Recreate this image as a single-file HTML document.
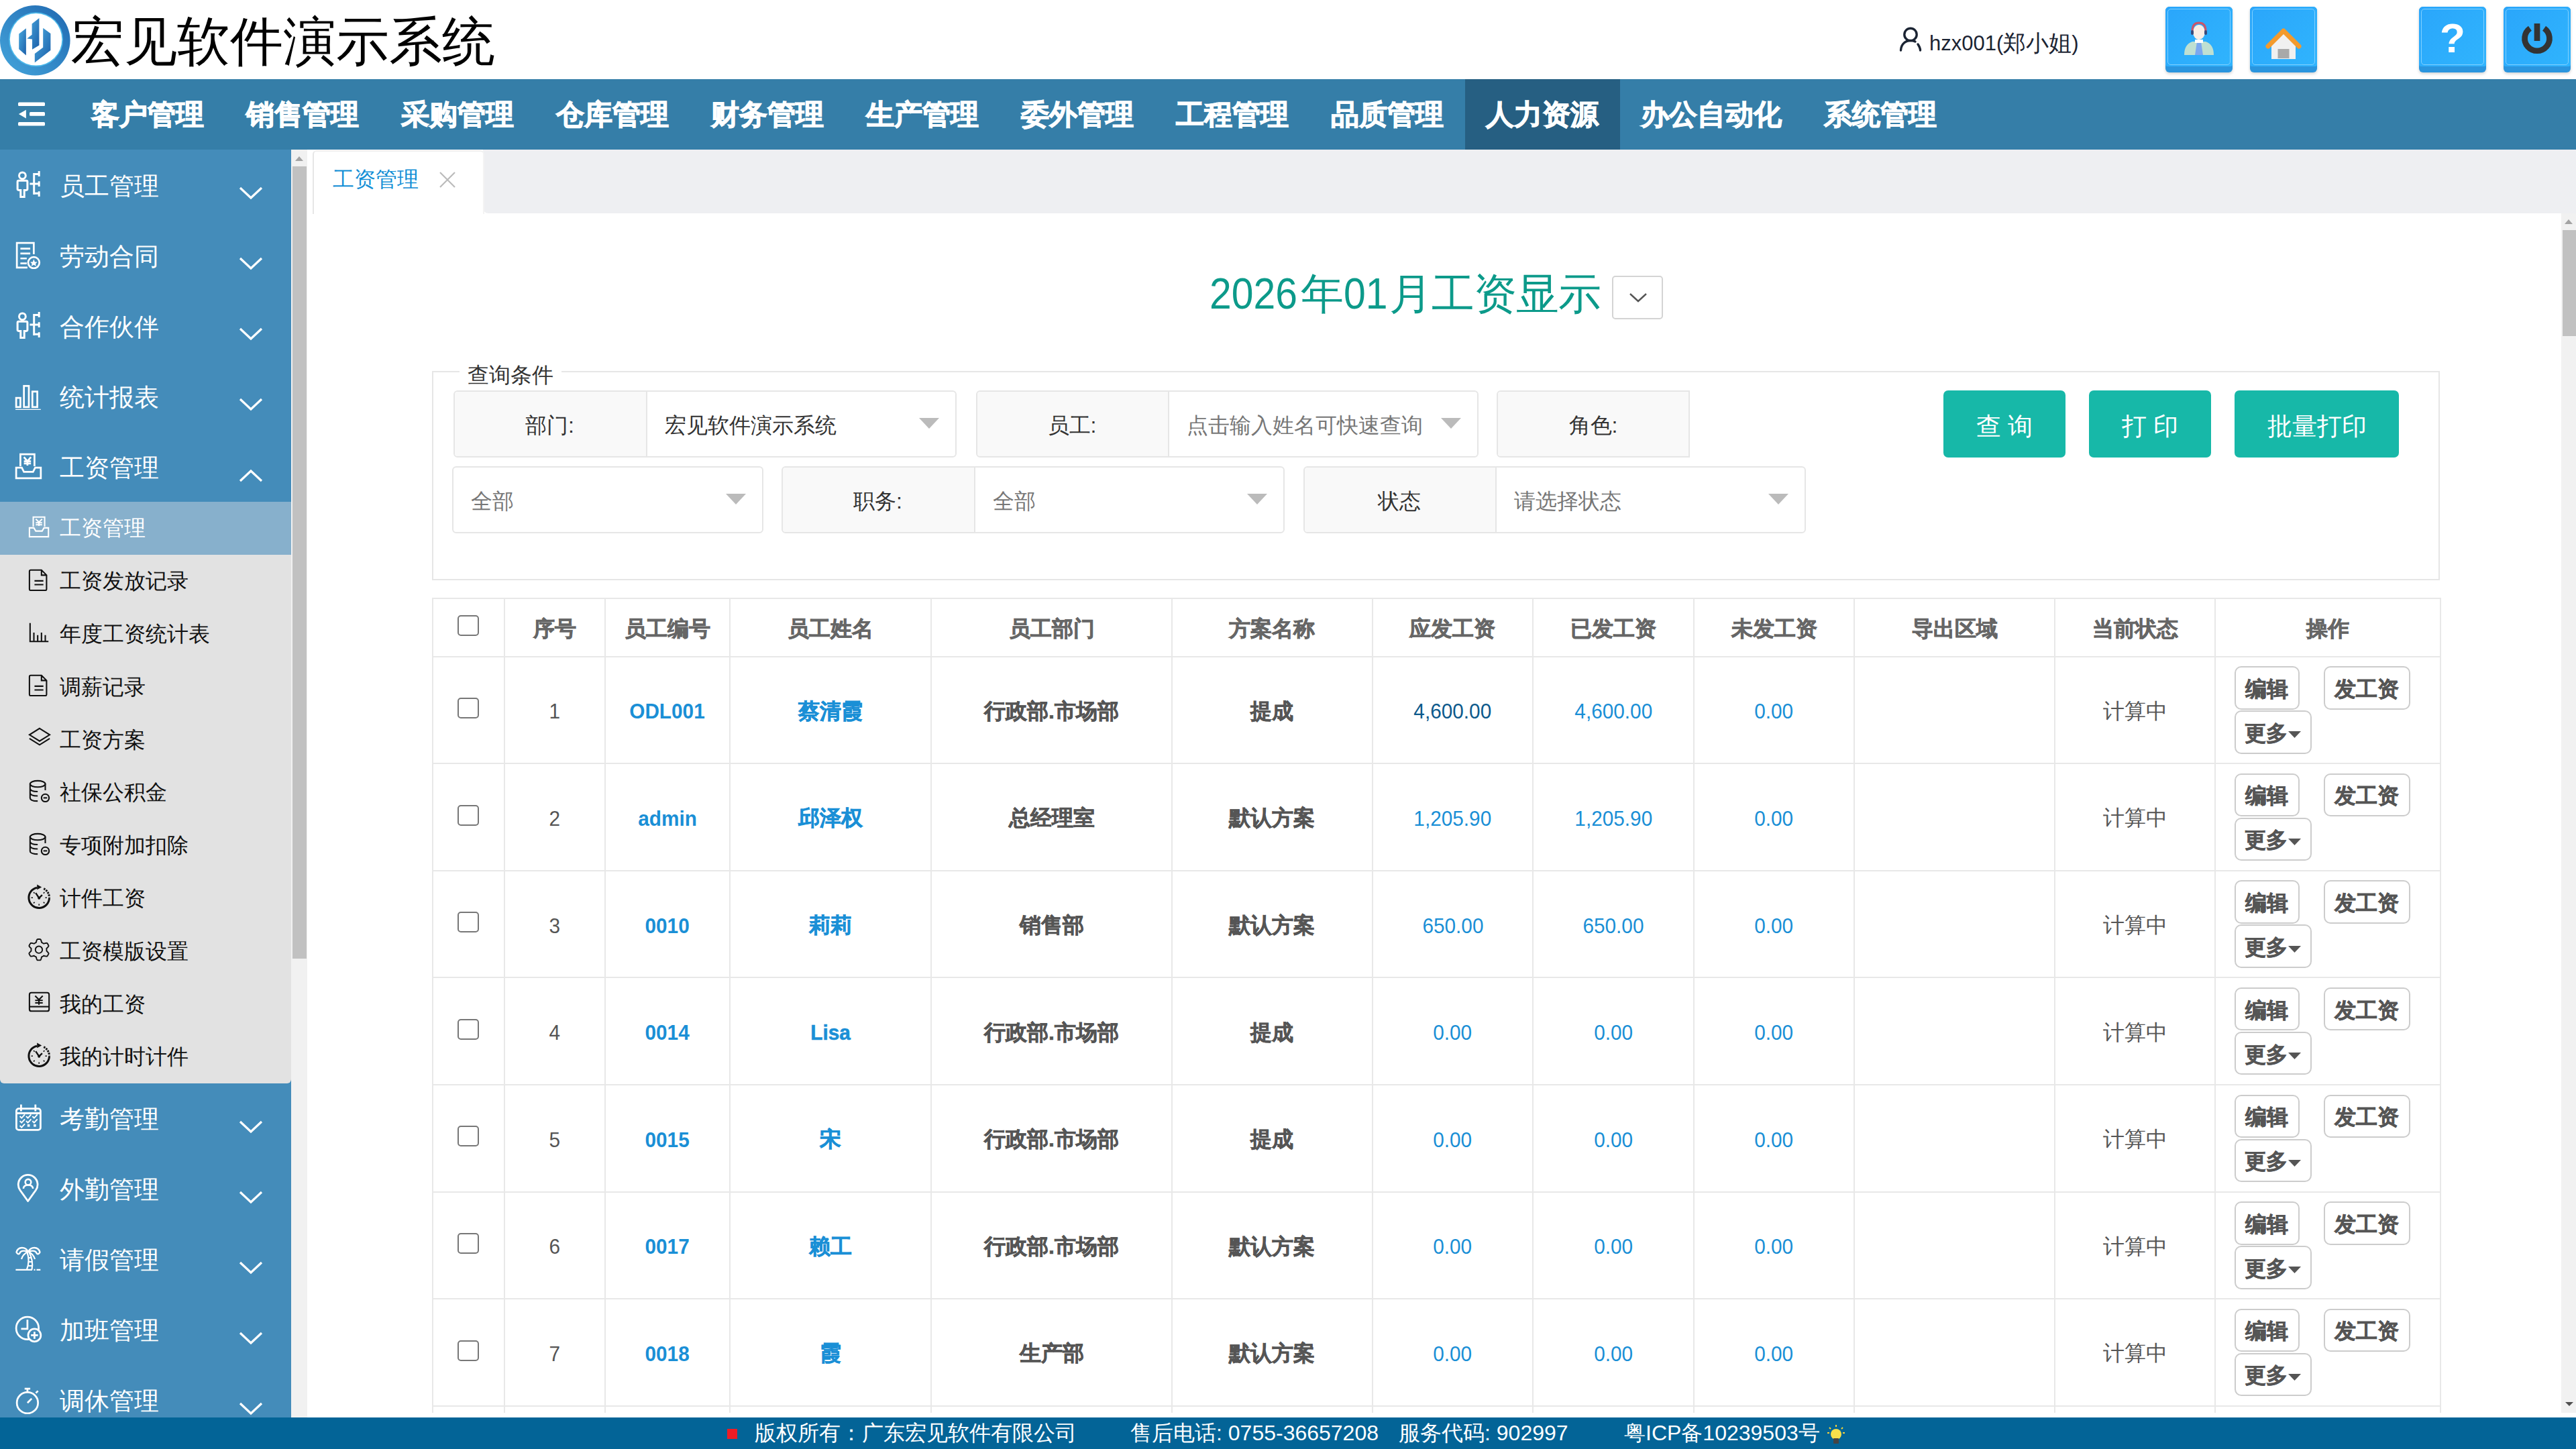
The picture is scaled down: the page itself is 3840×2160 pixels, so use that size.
<!DOCTYPE html><html><head><meta charset="utf-8"><style>
*{box-sizing:border-box;margin:0;padding:0}
html,body{width:3840px;height:2160px;overflow:hidden;background:#fff;font-family:"Liberation Sans",sans-serif}
.abs{position:absolute}
.c{position:absolute;display:flex;align-items:center;justify-content:center;white-space:nowrap}
.l{position:absolute;display:flex;align-items:center;white-space:nowrap}
</style></head><body><svg class="abs" style="left:0;top:8px" width="106" height="106" viewBox="0 0 106 106">
<defs>
<linearGradient id="lg1" x1="0" y1="1" x2="1" y2="0"><stop offset="0" stop-color="#45a6dc"/><stop offset="1" stop-color="#1f67b0"/></linearGradient>
<linearGradient id="lg2" x1="0" y1="0" x2="1" y2="1"><stop offset="0" stop-color="#49aadf"/><stop offset="1" stop-color="#1c5fa9"/></linearGradient>
</defs>
<circle cx="52.3" cy="52.3" r="52.3" fill="url(#lg1)"/>
<circle cx="53.6" cy="50.8" r="40.5" fill="#4cb8ea"/>
<circle cx="53.6" cy="50.8" r="38.8" fill="#fff"/>
<g fill="url(#lg2)" transform="translate(0,-8)">
<polygon points="28.2,50.5 38.9,42.2 38.9,82.4 28.2,73.3"/>
<polygon points="47.6,35.6 58.4,26.9 58.4,67.5 48,73.7 48,58.4 40.2,57.6 47.6,51.8"/>
<polygon points="64.2,41.8 75.4,50.1 75.4,74.9 51.8,93.2 51.8,79.9 64.2,70.8"/>
</g>
</svg><div class="l" style="left:106px;top:8px;height:110px;font-size:79px;color:#000">宏见软件演示系统</div><svg class="abs" style="left:2830px;top:38px" width="38" height="42" viewBox="0 0 38 42">
<circle cx="18" cy="13.4" r="9.2" fill="none" stroke="#1b2433" stroke-width="3.4"/>
<path d="M3.5 37 C4 27 11 22.5 18 22.5 C21 22.5 23 23 25 24" fill="none" stroke="#1b2433" stroke-width="3.4" stroke-linecap="round"/>
<path d="M29 28 C31 31 32.5 34 32.5 37" fill="none" stroke="#1b2433" stroke-width="3.4" stroke-linecap="round"/>
</svg><div class="l" style="left:2876px;top:40px;height:50px;font-size:34px;color:#1b2433"><span style="font-size:31px">hzx001(</span>郑小姐<span style="font-size:31px">)</span></div><div class="abs" style="left:3228px;top:10px;width:100px;height:98px;border-radius:6px;background:#2a95de;box-shadow:0 2px 4px rgba(0,0,0,0.18)">
<div class="abs" style="left:0;top:0;width:100px;height:89px;border-radius:6px 6px 3px 3px;background:linear-gradient(135deg,#2aa6fb,#30b4fd)"></div>
<div class="abs" style="left:3px;top:3px;width:94px;height:84px;border-radius:5px;border:1.5px solid #7fd0ff"></div>
<svg class="abs" style="left:0;top:0" width="100" height="98" viewBox="0 0 100 98">
<path d="M28 72 Q28 56 40 52 L60 52 Q72 56 72 72 Z" fill="#bfe0d2"/>
<path d="M47 52 L53 52 L56 72 L44 72 Z" fill="#7ba8f0"/>
<rect x="44" y="49" width="12" height="5" fill="#fff"/>
<ellipse cx="50" cy="38" rx="9" ry="11" fill="#fbeee6"/>
<path d="M40 36 Q40 24 50 24 Q60 24 60 36" fill="none" stroke="#c9566a" stroke-width="3"/>
<rect x="38" y="35" width="4" height="7" rx="2" fill="#3b4a7a"/>
<rect x="58" y="35" width="4" height="7" rx="2" fill="#3b4a7a"/>
</svg></div><div class="abs" style="left:3354px;top:10px;width:100px;height:98px;border-radius:6px;background:#2a95de;box-shadow:0 2px 4px rgba(0,0,0,0.18)">
<div class="abs" style="left:0;top:0;width:100px;height:89px;border-radius:6px 6px 3px 3px;background:linear-gradient(135deg,#2aa6fb,#30b4fd)"></div>
<div class="abs" style="left:3px;top:3px;width:94px;height:84px;border-radius:5px;border:1.5px solid #7fd0ff"></div>
<svg class="abs" style="left:0;top:0" width="100" height="98" viewBox="0 0 100 98">
<path d="M32 55 L50 38 L68 55 L68 78 L32 78 Z" fill="#f0f0f0"/>
<rect x="41.5" y="63" width="17" height="14" fill="#a9a9a9"/>
<path d="M27 59 L50 36 L73 59" stroke="#f39a2c" stroke-width="7" stroke-linejoin="round" stroke-linecap="round" fill="none"/>
</svg></div><div class="abs" style="left:3606px;top:10px;width:100px;height:98px;border-radius:6px;background:#2a95de;box-shadow:0 2px 4px rgba(0,0,0,0.18)">
<div class="abs" style="left:0;top:0;width:100px;height:89px;border-radius:6px 6px 3px 3px;background:linear-gradient(135deg,#2aa6fb,#30b4fd)"></div>
<div class="abs" style="left:3px;top:3px;width:94px;height:84px;border-radius:5px;border:1.5px solid #7fd0ff"></div>
<div class="c" style="left:0;top:0;width:100px;height:89px;font-size:62px;color:#fff;font-weight:bold;padding-top:4px">?</div></div><div class="abs" style="left:3732px;top:10px;width:100px;height:98px;border-radius:6px;background:#2a95de;box-shadow:0 2px 4px rgba(0,0,0,0.18)">
<div class="abs" style="left:0;top:0;width:100px;height:89px;border-radius:6px 6px 3px 3px;background:linear-gradient(135deg,#2aa6fb,#30b4fd)"></div>
<div class="abs" style="left:3px;top:3px;width:94px;height:84px;border-radius:5px;border:1.5px solid #7fd0ff"></div>
<svg class="abs" style="left:0;top:0" width="100" height="98" viewBox="0 0 100 98">
<path d="M60.58 32.19 A18.45 18.45 0 1 1 39.42 32.19" fill="none" stroke="#333" stroke-width="8.7"/>
<line x1="50" y1="25" x2="50" y2="51" stroke="#333" stroke-width="8.7"/>
</svg></div><div class="abs" style="left:0;top:118px;width:3840px;height:105px;background:#357ea8"></div><svg class="abs" style="left:0;top:118px" width="104" height="105" viewBox="0 0 104 105">
<rect x="27" y="34.4" width="40" height="5.6" rx="1.5" fill="#fff"/>
<rect x="44" y="49" width="23" height="5.8" rx="1.5" fill="#fff"/>
<rect x="27" y="63.9" width="40" height="5.6" rx="1.5" fill="#fff"/>
<polygon points="27.9,51.9 38.9,45.7 38.9,58.6" fill="#fff"/>
</svg><div class="c" style="left:104.5px;top:118px;width:231px;height:105px;font-size:42px;font-weight:bold;color:#fff;-webkit-text-stroke:1.1px #fff">客户管理</div><div class="c" style="left:335.5px;top:118px;width:231px;height:105px;font-size:42px;font-weight:bold;color:#fff;-webkit-text-stroke:1.1px #fff">销售管理</div><div class="c" style="left:566.5px;top:118px;width:231px;height:105px;font-size:42px;font-weight:bold;color:#fff;-webkit-text-stroke:1.1px #fff">采购管理</div><div class="c" style="left:797.5px;top:118px;width:231px;height:105px;font-size:42px;font-weight:bold;color:#fff;-webkit-text-stroke:1.1px #fff">仓库管理</div><div class="c" style="left:1028.5px;top:118px;width:231px;height:105px;font-size:42px;font-weight:bold;color:#fff;-webkit-text-stroke:1.1px #fff">财务管理</div><div class="c" style="left:1259.5px;top:118px;width:231px;height:105px;font-size:42px;font-weight:bold;color:#fff;-webkit-text-stroke:1.1px #fff">生产管理</div><div class="c" style="left:1490.5px;top:118px;width:231px;height:105px;font-size:42px;font-weight:bold;color:#fff;-webkit-text-stroke:1.1px #fff">委外管理</div><div class="c" style="left:1721.5px;top:118px;width:231px;height:105px;font-size:42px;font-weight:bold;color:#fff;-webkit-text-stroke:1.1px #fff">工程管理</div><div class="c" style="left:1952.5px;top:118px;width:231px;height:105px;font-size:42px;font-weight:bold;color:#fff;-webkit-text-stroke:1.1px #fff">品质管理</div><div class="c" style="left:2183.5px;top:118px;width:231px;height:105px;background:#265f82;font-size:42px;font-weight:bold;color:#fff;-webkit-text-stroke:1.1px #fff">人力资源</div><div class="c" style="left:2414.5px;top:118px;width:273px;height:105px;font-size:42px;font-weight:bold;color:#fff;-webkit-text-stroke:1.1px #fff">办公自动化</div><div class="c" style="left:2687.5px;top:118px;width:231px;height:105px;font-size:42px;font-weight:bold;color:#fff;-webkit-text-stroke:1.1px #fff">系统管理</div><div class="abs" style="left:0;top:223px;width:434px;height:1890px;background:#448cba"></div><div class="abs" style="left:434px;top:223px;width:24px;height:1890px;background:#f1f1f1"></div><div class="abs" style="left:436px;top:248px;width:21px;height:1181px;background:#c1c1c1"></div><svg class="abs" style="left:434px;top:228px" width="24" height="16"><polygon points="6,12 12,5 18,12" fill="#a3a3a3"/></svg><svg class="abs" style="left:15px;top:245px" width="60" height="60"><circle cx="18.4" cy="16.8" r="4.9" stroke="#fff" stroke-width="3" fill="none"/><path d="M11.1 26 q0 -1.8 1.8 -1.8 h11.2 q1.8 0 1.8 1.8 v10.6 q0 1.8 -1.8 1.8 h-2.9 v10.1 h-5.4 v-10.1 h-2.9 q-1.8 0 -1.8 -1.8 z" stroke="#fff" stroke-width="3" fill="none"/><path d="M29.4 29 h6.3 M35.7 13.3 v31.6 M34.2 14.6 h8.5 M43.2 10.1 v7.9 M35.7 29 h7 M43.2 25.3 v7.6 M34.2 43.3 h8.5 M43.2 40.2 v7.8" stroke="#fff" stroke-width="3" fill="none"/></svg><div class="l" style="left:89px;top:223px;height:105px;font-size:37px;color:#fff;padding-top:4px">员工管理</div><svg class="abs" style="left:356px;top:277px" width="36" height="22"><polyline points="2,3 18,18 34,3" fill="none" stroke="#fff" stroke-width="3.2"/></svg><svg class="abs" style="left:22px;top:359px" width="42" height="42" viewBox="0 0 40 40"><path d="M27 19 V3 H3 V38 H18" stroke="#fff" stroke-width="2.6" fill="none"/><path d="M8 11 h14 M8 18 h14 M8 25 h9 M8 32 h9" stroke="#fff" stroke-width="2.6" fill="none"/><circle cx="27" cy="31" r="8" stroke="#fff" stroke-width="2.6" fill="none"/><polygon points="27,26 28.5,30 32,30 29.5,32.5 30.5,36 27,34 23.5,36 24.5,32.5 22,30 25.5,30" fill="#fff"/></svg><div class="l" style="left:89px;top:328px;height:105px;font-size:37px;color:#fff;padding-top:4px">劳动合同</div><svg class="abs" style="left:356px;top:382px" width="36" height="22"><polyline points="2,3 18,18 34,3" fill="none" stroke="#fff" stroke-width="3.2"/></svg><svg class="abs" style="left:15px;top:455px" width="60" height="60"><circle cx="18.4" cy="16.8" r="4.9" stroke="#fff" stroke-width="3" fill="none"/><path d="M11.1 26 q0 -1.8 1.8 -1.8 h11.2 q1.8 0 1.8 1.8 v10.6 q0 1.8 -1.8 1.8 h-2.9 v10.1 h-5.4 v-10.1 h-2.9 q-1.8 0 -1.8 -1.8 z" stroke="#fff" stroke-width="3" fill="none"/><path d="M29.4 29 h6.3 M35.7 13.3 v31.6 M34.2 14.6 h8.5 M43.2 10.1 v7.9 M35.7 29 h7 M43.2 25.3 v7.6 M34.2 43.3 h8.5 M43.2 40.2 v7.8" stroke="#fff" stroke-width="3" fill="none"/></svg><div class="l" style="left:89px;top:433px;height:105px;font-size:37px;color:#fff;padding-top:4px">合作伙伴</div><svg class="abs" style="left:356px;top:487px" width="36" height="22"><polyline points="2,3 18,18 34,3" fill="none" stroke="#fff" stroke-width="3.2"/></svg><svg class="abs" style="left:22px;top:569px" width="42" height="42" viewBox="0 0 40 40"><rect x="2" y="23" width="6" height="13" stroke="#fff" stroke-width="2.6" fill="none"/><rect x="13" y="6" width="7" height="30" stroke="#fff" stroke-width="2.6" fill="none"/><rect x="25" y="14" width="7" height="22" stroke="#fff" stroke-width="2.6" fill="none"/><path d="M1 40 h36" stroke="#fff" stroke-width="2.6" fill="none"/></svg><div class="l" style="left:89px;top:538px;height:105px;font-size:37px;color:#fff;padding-top:4px">统计报表</div><svg class="abs" style="left:356px;top:592px" width="36" height="22"><polyline points="2,3 18,18 34,3" fill="none" stroke="#fff" stroke-width="3.2"/></svg><svg class="abs" style="left:22px;top:674px" width="42" height="42" viewBox="0 0 40 40"><path d="M8 20 V3 H28 V20" stroke="#fff" stroke-width="2.6" fill="none"/><path d="M2 22 v15 h35 v-15 h-8 l-3 6 h-13 l-3 -6 z" stroke="#fff" stroke-width="2.6" fill="none"/><path d="M13 7 l5 6 l5 -6 M18 13 v6 M13 13 h10 M13 16 h10" stroke="#fff" stroke-width="2.6" fill="none"/></svg><div class="l" style="left:89px;top:643px;height:105px;font-size:37px;color:#fff;padding-top:4px">工资管理</div><svg class="abs" style="left:356px;top:698px" width="36" height="22"><polyline points="2,19 18,4 34,19" fill="none" stroke="#fff" stroke-width="3.2"/></svg><div class="abs" style="left:0;top:748px;width:434px;height:866.8px;background:#e2e2e2;border-radius:0 0 6px 6px"></div><div class="abs" style="left:0;top:748px;width:434px;height:78.8px;background:#87b0cc"></div><svg class="abs" style="left:42px;top:768.0px" width="34" height="34" viewBox="0 0 36 36"><path d="M8 18 V3 H26 V18" stroke="#fff" stroke-width="2.2" fill="none"/><path d="M2 20 v14 h30 v-14 h-7 l-3 5 h-10 l-3 -5 z" stroke="#fff" stroke-width="2.2" fill="none"/><path d="M12 6 l5 5 l5 -5 M17 11 v6 M12 12 h10 M12 15 h10" stroke="#fff" stroke-width="2.2" fill="none"/></svg><div class="l" style="left:89px;top:748.0px;height:78.8px;font-size:32px;color:#fff;padding-top:2px">工资管理</div><svg class="abs" style="left:42px;top:846.8px" width="34" height="34" viewBox="0 0 36 36"><path d="M4 3 h17 l8 8 v22 q0 2 -2 2 h-23 q-2 0 -2 -2 v-28 q0 -2 2 -2 z M21 3 v8 h8" stroke="#111" stroke-width="2.2" fill="none"/><path d="M10 20 h14 M10 26 h14" stroke="#111" stroke-width="2.2" fill="none"/></svg><div class="l" style="left:89px;top:826.8px;height:78.8px;font-size:32px;color:#111;padding-top:2px">工资发放记录</div><svg class="abs" style="left:42px;top:925.6px" width="34" height="34" viewBox="0 0 36 36"><path d="M3 3 v29 h29 M9 32 v-14 M15 32 v-10 M21 32 v-14 M27 32 v-10" stroke="#111" stroke-width="2.2" fill="none"/></svg><div class="l" style="left:89px;top:905.6px;height:78.8px;font-size:32px;color:#111;padding-top:2px">年度工资统计表</div><svg class="abs" style="left:42px;top:1004.4px" width="34" height="34" viewBox="0 0 36 36"><path d="M4 3 h17 l8 8 v22 q0 2 -2 2 h-23 q-2 0 -2 -2 v-28 q0 -2 2 -2 z M21 3 v8 h8" stroke="#111" stroke-width="2.2" fill="none"/><path d="M10 20 h14 M10 26 h14" stroke="#111" stroke-width="2.2" fill="none"/></svg><div class="l" style="left:89px;top:984.4px;height:78.8px;font-size:32px;color:#111;padding-top:2px">调薪记录</div><svg class="abs" style="left:42px;top:1083.2px" width="34" height="34" viewBox="0 0 36 36"><path d="M18 3 L34 13 L18 23 L2 13 Z M2 19 L18 29 L34 19" stroke="#111" stroke-width="2.2" fill="none"/></svg><div class="l" style="left:89px;top:1063.2px;height:78.8px;font-size:32px;color:#111;padding-top:2px">工资方案</div><svg class="abs" style="left:42px;top:1162.0px" width="34" height="34" viewBox="0 0 36 36"><ellipse cx="15" cy="7" rx="12" ry="5" stroke="#111" stroke-width="2.2" fill="none"/><path d="M3 7 v22 q0 5 12 5 M3 14 q0 5 12 5 M3 21 q0 5 12 5 M27 7 v10" stroke="#111" stroke-width="2.2" fill="none"/><circle cx="27" cy="29" r="6" stroke="#111" stroke-width="2.2" fill="none"/><path d="M24 29 h6" stroke="#111" stroke-width="2.2" fill="none"/></svg><div class="l" style="left:89px;top:1142.0px;height:78.8px;font-size:32px;color:#111;padding-top:2px">社保公积金</div><svg class="abs" style="left:42px;top:1240.8px" width="34" height="34" viewBox="0 0 36 36"><ellipse cx="15" cy="7" rx="12" ry="5" stroke="#111" stroke-width="2.2" fill="none"/><path d="M3 7 v22 q0 5 12 5 M3 14 q0 5 12 5 M3 21 q0 5 12 5 M27 7 v10" stroke="#111" stroke-width="2.2" fill="none"/><circle cx="27" cy="29" r="6" stroke="#111" stroke-width="2.2" fill="none"/><path d="M24 29 h6" stroke="#111" stroke-width="2.2" fill="none"/></svg><div class="l" style="left:89px;top:1220.8px;height:78.8px;font-size:32px;color:#111;padding-top:2px">专项附加扣除</div><svg class="abs" style="left:30px;top:1310.0px" width="60" height="60"><path d="M43.5 28.2 A15.3 15.3 0 1 1 25 13.2" stroke="#111" stroke-width="3" fill="none"/><polygon points="25.2,8.6 32.2,12.4 25.2,16.2" fill="#111"/><path d="M35.2 14.6 A15.3 15.3 0 0 1 43.5 27.5" stroke="#111" stroke-width="3" stroke-dasharray="2.6 1.3" fill="none"/><line x1="37.50" y1="28.20" x2="39.80" y2="28.20" stroke="#111" stroke-width="1.6"/><line x1="34.78" y1="34.78" x2="36.40" y2="36.40" stroke="#111" stroke-width="1.6"/><line x1="28.20" y1="37.50" x2="28.20" y2="39.80" stroke="#111" stroke-width="1.6"/><line x1="21.62" y1="34.78" x2="20.00" y2="36.40" stroke="#111" stroke-width="1.6"/><line x1="18.90" y1="28.20" x2="16.60" y2="28.20" stroke="#111" stroke-width="1.6"/><line x1="21.62" y1="21.62" x2="20.00" y2="20.00" stroke="#111" stroke-width="1.6"/><line x1="34.78" y1="21.62" x2="36.40" y2="20.00" stroke="#111" stroke-width="1.6"/><polyline points="23.2,21.1 28.2,28.6 32.9,24.2" stroke="#111" stroke-width="2.4" fill="none"/><circle cx="28.2" cy="28.8" r="2" fill="#111"/></svg><div class="l" style="left:89px;top:1299.6px;height:78.8px;font-size:32px;color:#111;padding-top:2px">计件工资</div><svg class="abs" style="left:30px;top:1390.0px" width="60" height="60"><path d="M39.45 25.70 L39.44 26.10 L39.42 26.50 L39.39 26.90 L39.34 27.30 L39.59 27.75 L40.17 28.30 L40.78 28.90 L41.38 29.55 L41.93 30.24 L42.41 30.96 L42.51 31.58 L42.29 32.09 L42.06 32.58 L41.81 33.07 L41.55 33.55 L41.26 34.02 L40.97 34.48 L40.65 34.93 L40.32 35.37 L39.74 35.59 L38.88 35.54 L38.00 35.41 L37.14 35.21 L36.31 34.99 L35.54 34.75 L35.03 34.76 L34.71 35.00 L34.38 35.23 L34.04 35.45 L33.70 35.66 L33.35 35.85 L32.99 36.04 L32.63 36.21 L32.26 36.36 L31.99 36.80 L31.81 37.59 L31.60 38.41 L31.33 39.26 L31.01 40.08 L30.62 40.85 L30.14 41.25 L29.59 41.31 L29.05 41.36 L28.50 41.39 L27.95 41.40 L27.40 41.39 L26.85 41.36 L26.31 41.31 L25.76 41.25 L25.28 40.85 L24.89 40.08 L24.57 39.26 L24.30 38.41 L24.09 37.59 L23.91 36.80 L23.64 36.36 L23.27 36.21 L22.91 36.04 L22.55 35.85 L22.20 35.66 L21.86 35.45 L21.52 35.23 L21.19 35.00 L20.87 34.76 L20.36 34.75 L19.59 34.99 L18.76 35.21 L17.90 35.41 L17.02 35.54 L16.16 35.59 L15.58 35.37 L15.25 34.93 L14.93 34.48 L14.64 34.02 L14.35 33.55 L14.09 33.07 L13.84 32.58 L13.61 32.09 L13.39 31.58 L13.49 30.96 L13.97 30.24 L14.52 29.55 L15.12 28.90 L15.73 28.30 L16.31 27.75 L16.56 27.30 L16.51 26.90 L16.48 26.50 L16.46 26.10 L16.45 25.70 L16.46 25.30 L16.48 24.90 L16.51 24.50 L16.56 24.10 L16.31 23.65 L15.73 23.10 L15.12 22.50 L14.52 21.85 L13.97 21.16 L13.49 20.44 L13.39 19.82 L13.61 19.31 L13.84 18.82 L14.09 18.33 L14.35 17.85 L14.64 17.38 L14.93 16.92 L15.25 16.47 L15.58 16.03 L16.16 15.81 L17.02 15.86 L17.90 15.99 L18.76 16.19 L19.59 16.41 L20.36 16.65 L20.87 16.64 L21.19 16.40 L21.52 16.17 L21.86 15.95 L22.20 15.74 L22.55 15.55 L22.91 15.36 L23.27 15.19 L23.64 15.04 L23.91 14.60 L24.09 13.81 L24.30 12.99 L24.57 12.14 L24.89 11.32 L25.28 10.55 L25.76 10.15 L26.31 10.09 L26.85 10.04 L27.40 10.01 L27.95 10.00 L28.50 10.01 L29.05 10.04 L29.59 10.09 L30.14 10.15 L30.62 10.55 L31.01 11.32 L31.33 12.14 L31.60 12.99 L31.81 13.81 L31.99 14.60 L32.26 15.04 L32.63 15.19 L32.99 15.36 L33.35 15.55 L33.70 15.74 L34.04 15.95 L34.38 16.17 L34.71 16.40 L35.03 16.64 L35.54 16.65 L36.31 16.41 L37.14 16.19 L38.00 15.99 L38.88 15.86 L39.74 15.81 L40.32 16.03 L40.65 16.47 L40.97 16.92 L41.26 17.38 L41.55 17.85 L41.81 18.33 L42.06 18.82 L42.29 19.31 L42.51 19.82 L42.41 20.44 L41.93 21.16 L41.38 21.85 L40.78 22.50 L40.17 23.10 L39.59 23.65 L39.34 24.10 L39.39 24.50 L39.42 24.90 L39.44 25.30 L39.45 25.70 Z" stroke="#111" stroke-width="1.9" fill="none"/><circle cx="27.95" cy="25.7" r="5.2" stroke="#111" stroke-width="1.9" fill="none"/></svg><div class="l" style="left:89px;top:1378.4px;height:78.8px;font-size:32px;color:#111;padding-top:2px">工资模版设置</div><svg class="abs" style="left:42px;top:1477.2px" width="34" height="34" viewBox="0 0 36 36"><rect x="2" y="3" width="31" height="29" rx="3" stroke="#111" stroke-width="2.2" fill="none"/><path d="M2 25 h31" stroke="#111" stroke-width="2.2" fill="none"/><path d="M11 8 l6 6 l6 -6 M17 14 v8 M11 15 h12 M11 19 h12" stroke="#111" stroke-width="2.2" fill="none"/></svg><div class="l" style="left:89px;top:1457.2px;height:78.8px;font-size:32px;color:#111;padding-top:2px">我的工资</div><svg class="abs" style="left:30px;top:1546.4px" width="60" height="60"><path d="M43.5 28.2 A15.3 15.3 0 1 1 25 13.2" stroke="#111" stroke-width="3" fill="none"/><polygon points="25.2,8.6 32.2,12.4 25.2,16.2" fill="#111"/><path d="M35.2 14.6 A15.3 15.3 0 0 1 43.5 27.5" stroke="#111" stroke-width="3" stroke-dasharray="2.6 1.3" fill="none"/><line x1="37.50" y1="28.20" x2="39.80" y2="28.20" stroke="#111" stroke-width="1.6"/><line x1="34.78" y1="34.78" x2="36.40" y2="36.40" stroke="#111" stroke-width="1.6"/><line x1="28.20" y1="37.50" x2="28.20" y2="39.80" stroke="#111" stroke-width="1.6"/><line x1="21.62" y1="34.78" x2="20.00" y2="36.40" stroke="#111" stroke-width="1.6"/><line x1="18.90" y1="28.20" x2="16.60" y2="28.20" stroke="#111" stroke-width="1.6"/><line x1="21.62" y1="21.62" x2="20.00" y2="20.00" stroke="#111" stroke-width="1.6"/><line x1="34.78" y1="21.62" x2="36.40" y2="20.00" stroke="#111" stroke-width="1.6"/><polyline points="23.2,21.1 28.2,28.6 32.9,24.2" stroke="#111" stroke-width="2.4" fill="none"/><circle cx="28.2" cy="28.8" r="2" fill="#111"/></svg><div class="l" style="left:89px;top:1536.0px;height:78.8px;font-size:32px;color:#111;padding-top:2px">我的计时计件</div><svg class="abs" style="left:0;top:1614.8px" width="90" height="105"><rect x="24.4" y="37.6" width="36" height="31.8" rx="3.5" stroke="#fff" stroke-width="2.8" fill="none"/><path d="M31.4 31.5 v10 M52.8 31.5 v10 M24.4 44.5 h36" stroke="#fff" stroke-width="2.8" fill="none"/><polyline points="29.6,49 32.2,51.6 37.0,46.4" stroke="#fff" stroke-width="2" fill="none"/><polyline points="39.0,49 41.6,51.6 46.4,46.4" stroke="#fff" stroke-width="2" fill="none"/><polyline points="48.3,49 50.9,51.6 55.699999999999996,46.4" stroke="#fff" stroke-width="2" fill="none"/><polyline points="29.6,56 32.2,58.6 37.0,53.4" stroke="#fff" stroke-width="2" fill="none"/><polyline points="39.0,56 41.6,58.6 46.4,53.4" stroke="#fff" stroke-width="2" fill="none"/><polyline points="48.3,56 50.9,58.6 55.699999999999996,53.4" stroke="#fff" stroke-width="2" fill="none"/><polyline points="29.6,63 32.2,65.6 37.0,60.4" stroke="#fff" stroke-width="2" fill="none"/><rect x="40.800000000000004" y="61" width="3.6" height="3.6" fill="#fff"/><rect x="50.1" y="61" width="3.6" height="3.6" fill="#fff"/></svg><div class="l" style="left:89px;top:1614.8px;height:105px;font-size:37px;color:#fff;padding-top:4px">考勤管理</div><svg class="abs" style="left:356px;top:1668.8px" width="36" height="22"><polyline points="2,3 18,18 34,3" fill="none" stroke="#fff" stroke-width="3.2"/></svg><svg class="abs" style="left:0;top:1719.8px" width="90" height="105"><path d="M41.65 70.5 L29.95 54.2 A14.4 14.4 0 1 1 53.35 54.2 Z" stroke="#fff" stroke-width="2.8" fill="none" stroke-linejoin="round"/><circle cx="42" cy="42.2" r="4.3" stroke="#fff" stroke-width="2.6" fill="none"/><path d="M34.8 51.8 Q35.5 46.5 42 46.5 Q48.5 46.5 49.2 51.8" stroke="#fff" stroke-width="2.6" fill="none"/></svg><div class="l" style="left:89px;top:1719.8px;height:105px;font-size:37px;color:#fff;padding-top:4px">外勤管理</div><svg class="abs" style="left:356px;top:1773.8px" width="36" height="22"><polyline points="2,3 18,18 34,3" fill="none" stroke="#fff" stroke-width="3.2"/></svg><svg class="abs" style="left:0;top:1824.8px" width="90" height="105"><path d="M42 41 C38 33 27 33 24.5 41.5 C26 45 28 45 29.5 43 C31 39 36 39 42 41 Z" stroke="#fff" stroke-width="2.4" fill="none" stroke-linejoin="round"/><path d="M42 41 C46 33 57 33 59.5 41.5 C58 45 56 45 54.5 43 C53 39 48 39 42 41 Z" stroke="#fff" stroke-width="2.4" fill="none" stroke-linejoin="round"/><path d="M41 41 C36 44 33 48 32 52 M43 41 C48 44 51 48 52 52" stroke="#fff" stroke-width="2.2" fill="none"/><path d="M40.5 42 Q45 54 40 67.5 M43.5 42 Q50 54 47.5 67.5 M42 50 h5 M42.5 56 h5.5 M42 62 h5.5" stroke="#fff" stroke-width="2.2" fill="none"/><path d="M23.4 67.9 H48 M50.5 67.9 H52.5 M54.5 67.9 H60.3" stroke="#fff" stroke-width="2.4" fill="none"/></svg><div class="l" style="left:89px;top:1824.8px;height:105px;font-size:37px;color:#fff;padding-top:4px">请假管理</div><svg class="abs" style="left:356px;top:1878.8px" width="36" height="22"><polyline points="2,3 18,18 34,3" fill="none" stroke="#fff" stroke-width="3.2"/></svg><svg class="abs" style="left:22px;top:1960.8px" width="42" height="42" viewBox="0 0 40 40"><circle cx="18" cy="18" r="16" stroke="#fff" stroke-width="2.6" fill="none"/><path d="M18 6 v13 h-9" stroke="#fff" stroke-width="2.6" fill="none"/><circle cx="28" cy="28" r="9" fill="#448cba" stroke="#fff" stroke-width="2.6"/><path d="M28 23 v10 M23 28 h10" stroke="#fff" stroke-width="2.6" fill="none"/></svg><div class="l" style="left:89px;top:1929.8px;height:105px;font-size:37px;color:#fff;padding-top:4px">加班管理</div><svg class="abs" style="left:356px;top:1983.8px" width="36" height="22"><polyline points="2,3 18,18 34,3" fill="none" stroke="#fff" stroke-width="3.2"/></svg><svg class="abs" style="left:22px;top:2065.8px" width="42" height="42" viewBox="0 0 40 40"><circle cx="18" cy="24" r="15" stroke="#fff" stroke-width="2.6" fill="none"/><path d="M14 4 h8 M18 4 v5 M30 10 l3 -3 M18 24 l6 -6" stroke="#fff" stroke-width="2.6" fill="none"/></svg><div class="l" style="left:89px;top:2034.8px;height:105px;font-size:37px;color:#fff;padding-top:4px">调休管理</div><svg class="abs" style="left:356px;top:2088.8px" width="36" height="22"><polyline points="2,3 18,18 34,3" fill="none" stroke="#fff" stroke-width="3.2"/></svg><div class="abs" style="left:720px;top:223px;width:3120px;height:95px;background:#eeeff2;border-radius:0 0 0 8px"></div><div class="abs" style="left:466px;top:224px;width:256px;height:95px;background:#fff;border-left:2px solid #e6e6e6;border-top:2px solid #eeeeee;border-right:2px solid #f3f3f3;border-radius:6px 6px 0 0"></div><div class="l" style="left:496px;top:222px;height:92px;font-size:32px;color:#138fd6">工资管理</div><svg class="abs" style="left:654px;top:255px" width="26" height="26"><path d="M2 2 L24 24 M24 2 L2 24" stroke="#bbb" stroke-width="2.2"/></svg><div class="abs" style="left:3818px;top:318px;width:22px;height:1788px;background:#f1f1f1"></div><div class="abs" style="left:3820px;top:343px;width:20px;height:158px;background:#c1c1c1"></div><svg class="abs" style="left:3818px;top:323px" width="22" height="14"><polygon points="5,11 11,4 17,11" fill="#a3a3a3"/></svg><svg class="abs" style="left:3818px;top:2086px" width="22" height="14"><polygon points="6,4 18,4 12,10" fill="#505050"/></svg><div class="l" style="left:1803px;top:400px;height:76px;font-size:64px;color:#0c9a8a"><span style="display:inline-block;transform:scaleX(0.92);transform-origin:left">2026</span><span style="margin-left:-6px">年</span><span style="display:inline-block;transform:scaleX(0.92);transform-origin:left">01</span><span style="margin-left:-4px;letter-spacing:-1px">月工资显示</span></div><div class="abs" style="left:2403px;top:411px;width:76px;height:65px;border:2px solid #d4d4d4;border-radius:5px"></div><svg class="abs" style="left:2427px;top:435px" width="30" height="18"><polyline points="3,3 15,14 27,3" fill="none" stroke="#555" stroke-width="2.4"/></svg><div class="abs" style="left:644px;top:553px;width:2993px;height:312px;border:2px solid #e6e6e6"></div><div class="l" style="left:685px;top:540px;height:40px;padding:0 12px;background:#fff;font-size:32px;color:#333">查询条件</div><div class="abs" style="left:676px;top:582px;width:750px;height:100px;border:2px solid #e6e6e6;border-radius:6px;background:#fff;overflow:hidden"><div class="abs" style="left:0;top:0;width:287px;height:100%;background:#f9f9f9;border-right:2px solid #e6e6e6"></div></div><div class="c" style="left:676px;top:582px;width:287px;height:100px;font-size:32px;color:#333;padding-top:5px">部门:</div><div class="l" style="left:991px;top:582px;height:100px;font-size:32px;color:#333;padding-top:5px">宏见软件演示系统</div><svg class="abs" style="left:1370px;top:623px" width="30" height="17"><polygon points="0,0 30,0 15,16" fill="#bbb"/></svg><div class="abs" style="left:1455px;top:582px;width:749px;height:100px;border:2px solid #e6e6e6;border-radius:6px;background:#fff;overflow:hidden"><div class="abs" style="left:0;top:0;width:286px;height:100%;background:#f9f9f9;border-right:2px solid #e6e6e6"></div></div><div class="c" style="left:1455px;top:582px;width:286px;height:100px;font-size:32px;color:#333;padding-top:5px">员工:</div><div class="l" style="left:1769px;top:582px;height:100px;font-size:32px;color:#777;padding-top:5px">点击输入姓名可快速查询</div><svg class="abs" style="left:2148px;top:623px" width="30" height="17"><polygon points="0,0 30,0 15,16" fill="#bbb"/></svg><div class="abs" style="left:2231px;top:582px;width:288px;height:100px;border:2px solid #e6e6e6;border-radius:6px 0 0 6px;background:#fff;overflow:hidden"><div class="abs" style="left:0;top:0;width:288px;height:100%;background:#f9f9f9;border-right:2px solid #e6e6e6"></div></div><div class="c" style="left:2231px;top:582px;width:288px;height:100px;font-size:32px;color:#333;padding-top:5px">角色:</div><div class="abs" style="left:674px;top:695px;width:464px;height:100px;border:2px solid #e6e6e6;border-radius:6px;background:#fff;overflow:hidden"></div><div class="l" style="left:702px;top:695px;height:100px;font-size:32px;color:#777;padding-top:5px">全部</div><svg class="abs" style="left:1082px;top:736px" width="30" height="17"><polygon points="0,0 30,0 15,16" fill="#bbb"/></svg><div class="abs" style="left:1165px;top:695px;width:750px;height:100px;border:2px solid #e6e6e6;border-radius:6px;background:#fff;overflow:hidden"><div class="abs" style="left:0;top:0;width:287px;height:100%;background:#f9f9f9;border-right:2px solid #e6e6e6"></div></div><div class="c" style="left:1165px;top:695px;width:287px;height:100px;font-size:32px;color:#333;padding-top:5px">职务:</div><div class="l" style="left:1480px;top:695px;height:100px;font-size:32px;color:#777;padding-top:5px">全部</div><svg class="abs" style="left:1859px;top:736px" width="30" height="17"><polygon points="0,0 30,0 15,16" fill="#bbb"/></svg><div class="abs" style="left:1943px;top:695px;width:749px;height:100px;border:2px solid #e6e6e6;border-radius:6px;background:#fff;overflow:hidden"><div class="abs" style="left:0;top:0;width:286px;height:100%;background:#f9f9f9;border-right:2px solid #e6e6e6"></div></div><div class="c" style="left:1943px;top:695px;width:286px;height:100px;font-size:32px;color:#333;padding-top:5px">状态</div><div class="l" style="left:2257px;top:695px;height:100px;font-size:32px;color:#777;padding-top:5px">请选择状态</div><svg class="abs" style="left:2636px;top:736px" width="30" height="17"><polygon points="0,0 30,0 15,16" fill="#bbb"/></svg><div class="c" style="left:2897px;top:582px;width:182px;height:100px;background:#17b8a8;border-radius:7px;font-size:37px;color:#fff;padding-top:8px">查 询</div><div class="c" style="left:3114px;top:582px;width:182px;height:100px;background:#17b8a8;border-radius:7px;font-size:37px;color:#fff;padding-top:8px">打 印</div><div class="c" style="left:3331px;top:582px;width:245px;height:100px;background:#17b8a8;border-radius:7px;font-size:37px;color:#fff;padding-top:8px">批量打印</div><div class="abs" style="left:644px;top:891.0px;width:2995px;height:2px;background:#e8e8e8"></div><div class="abs" style="left:644px;top:977.6px;width:2995px;height:2px;background:#e8e8e8"></div><div class="abs" style="left:644px;top:1137.2px;width:2995px;height:2px;background:#e8e8e8"></div><div class="abs" style="left:644px;top:1296.8px;width:2995px;height:2px;background:#e8e8e8"></div><div class="abs" style="left:644px;top:1456.4px;width:2995px;height:2px;background:#e8e8e8"></div><div class="abs" style="left:644px;top:1616.0px;width:2995px;height:2px;background:#e8e8e8"></div><div class="abs" style="left:644px;top:1775.6px;width:2995px;height:2px;background:#e8e8e8"></div><div class="abs" style="left:644px;top:1935.2px;width:2995px;height:2px;background:#e8e8e8"></div><div class="abs" style="left:644px;top:2094.8px;width:2995px;height:2px;background:#e8e8e8"></div><div class="abs" style="left:644.0px;top:891px;width:2px;height:1215px;background:#e8e8e8"></div><div class="abs" style="left:750.7px;top:891px;width:2px;height:1215px;background:#e8e8e8"></div><div class="abs" style="left:900.6px;top:891px;width:2px;height:1215px;background:#e8e8e8"></div><div class="abs" style="left:1087.0px;top:891px;width:2px;height:1215px;background:#e8e8e8"></div><div class="abs" style="left:1386.8px;top:891px;width:2px;height:1215px;background:#e8e8e8"></div><div class="abs" style="left:1746.3px;top:891px;width:2px;height:1215px;background:#e8e8e8"></div><div class="abs" style="left:2044.6px;top:891px;width:2px;height:1215px;background:#e8e8e8"></div><div class="abs" style="left:2284.3px;top:891px;width:2px;height:1215px;background:#e8e8e8"></div><div class="abs" style="left:2524.0px;top:891px;width:2px;height:1215px;background:#e8e8e8"></div><div class="abs" style="left:2763.0px;top:891px;width:2px;height:1215px;background:#e8e8e8"></div><div class="abs" style="left:3062.0px;top:891px;width:2px;height:1215px;background:#e8e8e8"></div><div class="abs" style="left:3301.0px;top:891px;width:2px;height:1215px;background:#e8e8e8"></div><div class="abs" style="left:3637.0px;top:891px;width:2px;height:1215px;background:#e8e8e8"></div><div class="abs" style="left:682.4px;top:917.0px;width:32px;height:31px;border:2.5px solid #777;border-radius:5px;background:#fff"></div><div class="c" style="left:751.7px;top:892px;width:149.9px;height:86.6px;font-size:32px;font-weight:bold;color:#666;-webkit-text-stroke:0.7px #666;padding-top:6px">序号</div><div class="c" style="left:901.6px;top:892px;width:186.4px;height:86.6px;font-size:32px;font-weight:bold;color:#666;-webkit-text-stroke:0.7px #666;padding-top:6px">员工编号</div><div class="c" style="left:1088px;top:892px;width:299.8px;height:86.6px;font-size:32px;font-weight:bold;color:#666;-webkit-text-stroke:0.7px #666;padding-top:6px">员工姓名</div><div class="c" style="left:1387.8px;top:892px;width:359.5px;height:86.6px;font-size:32px;font-weight:bold;color:#666;-webkit-text-stroke:0.7px #666;padding-top:6px">员工部门</div><div class="c" style="left:1747.3px;top:892px;width:298.3px;height:86.6px;font-size:32px;font-weight:bold;color:#666;-webkit-text-stroke:0.7px #666;padding-top:6px">方案名称</div><div class="c" style="left:2045.6px;top:892px;width:239.7px;height:86.6px;font-size:32px;font-weight:bold;color:#666;-webkit-text-stroke:0.7px #666;padding-top:6px">应发工资</div><div class="c" style="left:2285.3px;top:892px;width:239.7px;height:86.6px;font-size:32px;font-weight:bold;color:#666;-webkit-text-stroke:0.7px #666;padding-top:6px">已发工资</div><div class="c" style="left:2525px;top:892px;width:239.0px;height:86.6px;font-size:32px;font-weight:bold;color:#666;-webkit-text-stroke:0.7px #666;padding-top:6px">未发工资</div><div class="c" style="left:2764px;top:892px;width:299.0px;height:86.6px;font-size:32px;font-weight:bold;color:#666;-webkit-text-stroke:0.7px #666;padding-top:6px">导出区域</div><div class="c" style="left:3063px;top:892px;width:239.0px;height:86.6px;font-size:32px;font-weight:bold;color:#666;-webkit-text-stroke:0.7px #666;padding-top:6px">当前状态</div><div class="c" style="left:3302px;top:892px;width:336.0px;height:86.6px;font-size:32px;font-weight:bold;color:#666;-webkit-text-stroke:0.7px #666;padding-top:6px">操作</div><div class="abs" style="left:682.4px;top:1039.9px;width:32px;height:31px;border:2.5px solid #777;border-radius:5px;background:#fff"></div><div class="c" style="left:751.7px;top:978.6px;width:149.9px;height:159.6px;font-size:32px;color:#555;padding-top:5px"><span style="display:inline-block;transform:scaleX(0.93)">1</span></div><div class="c" style="left:901.6px;top:978.6px;width:186.4px;height:159.6px;font-size:32px;color:#1a8fd6;font-weight:600;padding-top:5px"><span style="display:inline-block;transform:scaleX(0.93)">ODL001</span></div><div class="c" style="left:1088px;top:978.6px;width:299.8px;height:159.6px;font-size:32px;color:#1a8fd6;font-weight:bold;-webkit-text-stroke:0.6px #1a8fd6;padding-top:5px">蔡清霞</div><div class="c" style="left:1387.8px;top:978.6px;width:359.5px;height:159.6px;font-size:32px;color:#555;font-weight:bold;-webkit-text-stroke:0.6px #555;padding-top:5px">行政部.市场部</div><div class="c" style="left:1747.3px;top:978.6px;width:298.3px;height:159.6px;font-size:32px;color:#555;font-weight:bold;-webkit-text-stroke:0.6px #555;padding-top:5px">提成</div><div class="c" style="left:2045.6px;top:978.6px;width:239.7px;height:159.6px;font-size:32px;color:#0d5a8c;padding-top:5px"><span style="display:inline-block;transform:scaleX(0.93)">4,600.00</span></div><div class="c" style="left:2285.3px;top:978.6px;width:239.7px;height:159.6px;font-size:32px;color:#1a8fd6;padding-top:5px"><span style="display:inline-block;transform:scaleX(0.93)">4,600.00</span></div><div class="c" style="left:2525px;top:978.6px;width:239.0px;height:159.6px;font-size:32px;color:#1a8fd6;padding-top:5px"><span style="display:inline-block;transform:scaleX(0.93)">0.00</span></div><div class="c" style="left:3063px;top:978.6px;width:239px;height:159.6px;font-size:32px;color:#555;padding-top:5px">计算中</div><div class="c" style="left:3330.5px;top:993.1px;width:97px;height:64.5px;border:2px solid #ccc;border-radius:10px;font-size:32px;font-weight:bold;color:#555;background:#fff;padding-top:5px;-webkit-text-stroke:0.6px #555">编辑</div><div class="c" style="left:3463.5px;top:993.1px;width:129px;height:64.5px;border:2px solid #ccc;border-radius:10px;font-size:32px;font-weight:bold;color:#555;background:#fff;padding-top:5px;-webkit-text-stroke:0.6px #555">发工资</div><div class="c" style="left:3330.5px;top:1059.1px;width:115px;height:64.5px;border:2px solid #ccc;border-radius:10px;font-size:32px;font-weight:bold;color:#555;background:#fff;padding-top:5px;-webkit-text-stroke:0.6px #555">更多<svg width="19" height="11" style="margin-left:1px;margin-top:4px"><polygon points="0,0 19,0 9.5,10" fill="#555"/></svg></div><div class="abs" style="left:682.4px;top:1199.5px;width:32px;height:31px;border:2.5px solid #777;border-radius:5px;background:#fff"></div><div class="c" style="left:751.7px;top:1138.2px;width:149.9px;height:159.6px;font-size:32px;color:#555;padding-top:5px"><span style="display:inline-block;transform:scaleX(0.93)">2</span></div><div class="c" style="left:901.6px;top:1138.2px;width:186.4px;height:159.6px;font-size:32px;color:#1a8fd6;font-weight:600;padding-top:5px"><span style="display:inline-block;transform:scaleX(0.93)">admin</span></div><div class="c" style="left:1088px;top:1138.2px;width:299.8px;height:159.6px;font-size:32px;color:#1a8fd6;font-weight:bold;-webkit-text-stroke:0.6px #1a8fd6;padding-top:5px">邱泽权</div><div class="c" style="left:1387.8px;top:1138.2px;width:359.5px;height:159.6px;font-size:32px;color:#555;font-weight:bold;-webkit-text-stroke:0.6px #555;padding-top:5px">总经理室</div><div class="c" style="left:1747.3px;top:1138.2px;width:298.3px;height:159.6px;font-size:32px;color:#555;font-weight:bold;-webkit-text-stroke:0.6px #555;padding-top:5px">默认方案</div><div class="c" style="left:2045.6px;top:1138.2px;width:239.7px;height:159.6px;font-size:32px;color:#1a8fd6;padding-top:5px"><span style="display:inline-block;transform:scaleX(0.93)">1,205.90</span></div><div class="c" style="left:2285.3px;top:1138.2px;width:239.7px;height:159.6px;font-size:32px;color:#1a8fd6;padding-top:5px"><span style="display:inline-block;transform:scaleX(0.93)">1,205.90</span></div><div class="c" style="left:2525px;top:1138.2px;width:239.0px;height:159.6px;font-size:32px;color:#1a8fd6;padding-top:5px"><span style="display:inline-block;transform:scaleX(0.93)">0.00</span></div><div class="c" style="left:3063px;top:1138.2px;width:239px;height:159.6px;font-size:32px;color:#555;padding-top:5px">计算中</div><div class="c" style="left:3330.5px;top:1152.7px;width:97px;height:64.5px;border:2px solid #ccc;border-radius:10px;font-size:32px;font-weight:bold;color:#555;background:#fff;padding-top:5px;-webkit-text-stroke:0.6px #555">编辑</div><div class="c" style="left:3463.5px;top:1152.7px;width:129px;height:64.5px;border:2px solid #ccc;border-radius:10px;font-size:32px;font-weight:bold;color:#555;background:#fff;padding-top:5px;-webkit-text-stroke:0.6px #555">发工资</div><div class="c" style="left:3330.5px;top:1218.7px;width:115px;height:64.5px;border:2px solid #ccc;border-radius:10px;font-size:32px;font-weight:bold;color:#555;background:#fff;padding-top:5px;-webkit-text-stroke:0.6px #555">更多<svg width="19" height="11" style="margin-left:1px;margin-top:4px"><polygon points="0,0 19,0 9.5,10" fill="#555"/></svg></div><div class="abs" style="left:682.4px;top:1359.1px;width:32px;height:31px;border:2.5px solid #777;border-radius:5px;background:#fff"></div><div class="c" style="left:751.7px;top:1297.8px;width:149.9px;height:159.6px;font-size:32px;color:#555;padding-top:5px"><span style="display:inline-block;transform:scaleX(0.93)">3</span></div><div class="c" style="left:901.6px;top:1297.8px;width:186.4px;height:159.6px;font-size:32px;color:#1a8fd6;font-weight:600;padding-top:5px"><span style="display:inline-block;transform:scaleX(0.93)">0010</span></div><div class="c" style="left:1088px;top:1297.8px;width:299.8px;height:159.6px;font-size:32px;color:#1a8fd6;font-weight:bold;-webkit-text-stroke:0.6px #1a8fd6;padding-top:5px">莉莉</div><div class="c" style="left:1387.8px;top:1297.8px;width:359.5px;height:159.6px;font-size:32px;color:#555;font-weight:bold;-webkit-text-stroke:0.6px #555;padding-top:5px">销售部</div><div class="c" style="left:1747.3px;top:1297.8px;width:298.3px;height:159.6px;font-size:32px;color:#555;font-weight:bold;-webkit-text-stroke:0.6px #555;padding-top:5px">默认方案</div><div class="c" style="left:2045.6px;top:1297.8px;width:239.7px;height:159.6px;font-size:32px;color:#1a8fd6;padding-top:5px"><span style="display:inline-block;transform:scaleX(0.93)">650.00</span></div><div class="c" style="left:2285.3px;top:1297.8px;width:239.7px;height:159.6px;font-size:32px;color:#1a8fd6;padding-top:5px"><span style="display:inline-block;transform:scaleX(0.93)">650.00</span></div><div class="c" style="left:2525px;top:1297.8px;width:239.0px;height:159.6px;font-size:32px;color:#1a8fd6;padding-top:5px"><span style="display:inline-block;transform:scaleX(0.93)">0.00</span></div><div class="c" style="left:3063px;top:1297.8px;width:239px;height:159.6px;font-size:32px;color:#555;padding-top:5px">计算中</div><div class="c" style="left:3330.5px;top:1312.3px;width:97px;height:64.5px;border:2px solid #ccc;border-radius:10px;font-size:32px;font-weight:bold;color:#555;background:#fff;padding-top:5px;-webkit-text-stroke:0.6px #555">编辑</div><div class="c" style="left:3463.5px;top:1312.3px;width:129px;height:64.5px;border:2px solid #ccc;border-radius:10px;font-size:32px;font-weight:bold;color:#555;background:#fff;padding-top:5px;-webkit-text-stroke:0.6px #555">发工资</div><div class="c" style="left:3330.5px;top:1378.3px;width:115px;height:64.5px;border:2px solid #ccc;border-radius:10px;font-size:32px;font-weight:bold;color:#555;background:#fff;padding-top:5px;-webkit-text-stroke:0.6px #555">更多<svg width="19" height="11" style="margin-left:1px;margin-top:4px"><polygon points="0,0 19,0 9.5,10" fill="#555"/></svg></div><div class="abs" style="left:682.4px;top:1518.7px;width:32px;height:31px;border:2.5px solid #777;border-radius:5px;background:#fff"></div><div class="c" style="left:751.7px;top:1457.4px;width:149.9px;height:159.6px;font-size:32px;color:#555;padding-top:5px"><span style="display:inline-block;transform:scaleX(0.93)">4</span></div><div class="c" style="left:901.6px;top:1457.4px;width:186.4px;height:159.6px;font-size:32px;color:#1a8fd6;font-weight:600;padding-top:5px"><span style="display:inline-block;transform:scaleX(0.93)">0014</span></div><div class="c" style="left:1088px;top:1457.4px;width:299.8px;height:159.6px;font-size:32px;color:#1a8fd6;font-weight:bold;-webkit-text-stroke:0.6px #1a8fd6;padding-top:5px"><span style="display:inline-block;transform:scaleX(0.93)">Lisa</span></div><div class="c" style="left:1387.8px;top:1457.4px;width:359.5px;height:159.6px;font-size:32px;color:#555;font-weight:bold;-webkit-text-stroke:0.6px #555;padding-top:5px">行政部.市场部</div><div class="c" style="left:1747.3px;top:1457.4px;width:298.3px;height:159.6px;font-size:32px;color:#555;font-weight:bold;-webkit-text-stroke:0.6px #555;padding-top:5px">提成</div><div class="c" style="left:2045.6px;top:1457.4px;width:239.7px;height:159.6px;font-size:32px;color:#1a8fd6;padding-top:5px"><span style="display:inline-block;transform:scaleX(0.93)">0.00</span></div><div class="c" style="left:2285.3px;top:1457.4px;width:239.7px;height:159.6px;font-size:32px;color:#1a8fd6;padding-top:5px"><span style="display:inline-block;transform:scaleX(0.93)">0.00</span></div><div class="c" style="left:2525px;top:1457.4px;width:239.0px;height:159.6px;font-size:32px;color:#1a8fd6;padding-top:5px"><span style="display:inline-block;transform:scaleX(0.93)">0.00</span></div><div class="c" style="left:3063px;top:1457.4px;width:239px;height:159.6px;font-size:32px;color:#555;padding-top:5px">计算中</div><div class="c" style="left:3330.5px;top:1471.9px;width:97px;height:64.5px;border:2px solid #ccc;border-radius:10px;font-size:32px;font-weight:bold;color:#555;background:#fff;padding-top:5px;-webkit-text-stroke:0.6px #555">编辑</div><div class="c" style="left:3463.5px;top:1471.9px;width:129px;height:64.5px;border:2px solid #ccc;border-radius:10px;font-size:32px;font-weight:bold;color:#555;background:#fff;padding-top:5px;-webkit-text-stroke:0.6px #555">发工资</div><div class="c" style="left:3330.5px;top:1537.9px;width:115px;height:64.5px;border:2px solid #ccc;border-radius:10px;font-size:32px;font-weight:bold;color:#555;background:#fff;padding-top:5px;-webkit-text-stroke:0.6px #555">更多<svg width="19" height="11" style="margin-left:1px;margin-top:4px"><polygon points="0,0 19,0 9.5,10" fill="#555"/></svg></div><div class="abs" style="left:682.4px;top:1678.3px;width:32px;height:31px;border:2.5px solid #777;border-radius:5px;background:#fff"></div><div class="c" style="left:751.7px;top:1617.0px;width:149.9px;height:159.6px;font-size:32px;color:#555;padding-top:5px"><span style="display:inline-block;transform:scaleX(0.93)">5</span></div><div class="c" style="left:901.6px;top:1617.0px;width:186.4px;height:159.6px;font-size:32px;color:#1a8fd6;font-weight:600;padding-top:5px"><span style="display:inline-block;transform:scaleX(0.93)">0015</span></div><div class="c" style="left:1088px;top:1617.0px;width:299.8px;height:159.6px;font-size:32px;color:#1a8fd6;font-weight:bold;-webkit-text-stroke:0.6px #1a8fd6;padding-top:5px">宋</div><div class="c" style="left:1387.8px;top:1617.0px;width:359.5px;height:159.6px;font-size:32px;color:#555;font-weight:bold;-webkit-text-stroke:0.6px #555;padding-top:5px">行政部.市场部</div><div class="c" style="left:1747.3px;top:1617.0px;width:298.3px;height:159.6px;font-size:32px;color:#555;font-weight:bold;-webkit-text-stroke:0.6px #555;padding-top:5px">提成</div><div class="c" style="left:2045.6px;top:1617.0px;width:239.7px;height:159.6px;font-size:32px;color:#1a8fd6;padding-top:5px"><span style="display:inline-block;transform:scaleX(0.93)">0.00</span></div><div class="c" style="left:2285.3px;top:1617.0px;width:239.7px;height:159.6px;font-size:32px;color:#1a8fd6;padding-top:5px"><span style="display:inline-block;transform:scaleX(0.93)">0.00</span></div><div class="c" style="left:2525px;top:1617.0px;width:239.0px;height:159.6px;font-size:32px;color:#1a8fd6;padding-top:5px"><span style="display:inline-block;transform:scaleX(0.93)">0.00</span></div><div class="c" style="left:3063px;top:1617.0px;width:239px;height:159.6px;font-size:32px;color:#555;padding-top:5px">计算中</div><div class="c" style="left:3330.5px;top:1631.5px;width:97px;height:64.5px;border:2px solid #ccc;border-radius:10px;font-size:32px;font-weight:bold;color:#555;background:#fff;padding-top:5px;-webkit-text-stroke:0.6px #555">编辑</div><div class="c" style="left:3463.5px;top:1631.5px;width:129px;height:64.5px;border:2px solid #ccc;border-radius:10px;font-size:32px;font-weight:bold;color:#555;background:#fff;padding-top:5px;-webkit-text-stroke:0.6px #555">发工资</div><div class="c" style="left:3330.5px;top:1697.5px;width:115px;height:64.5px;border:2px solid #ccc;border-radius:10px;font-size:32px;font-weight:bold;color:#555;background:#fff;padding-top:5px;-webkit-text-stroke:0.6px #555">更多<svg width="19" height="11" style="margin-left:1px;margin-top:4px"><polygon points="0,0 19,0 9.5,10" fill="#555"/></svg></div><div class="abs" style="left:682.4px;top:1837.9px;width:32px;height:31px;border:2.5px solid #777;border-radius:5px;background:#fff"></div><div class="c" style="left:751.7px;top:1776.6px;width:149.9px;height:159.6px;font-size:32px;color:#555;padding-top:5px"><span style="display:inline-block;transform:scaleX(0.93)">6</span></div><div class="c" style="left:901.6px;top:1776.6px;width:186.4px;height:159.6px;font-size:32px;color:#1a8fd6;font-weight:600;padding-top:5px"><span style="display:inline-block;transform:scaleX(0.93)">0017</span></div><div class="c" style="left:1088px;top:1776.6px;width:299.8px;height:159.6px;font-size:32px;color:#1a8fd6;font-weight:bold;-webkit-text-stroke:0.6px #1a8fd6;padding-top:5px">赖工</div><div class="c" style="left:1387.8px;top:1776.6px;width:359.5px;height:159.6px;font-size:32px;color:#555;font-weight:bold;-webkit-text-stroke:0.6px #555;padding-top:5px">行政部.市场部</div><div class="c" style="left:1747.3px;top:1776.6px;width:298.3px;height:159.6px;font-size:32px;color:#555;font-weight:bold;-webkit-text-stroke:0.6px #555;padding-top:5px">默认方案</div><div class="c" style="left:2045.6px;top:1776.6px;width:239.7px;height:159.6px;font-size:32px;color:#1a8fd6;padding-top:5px"><span style="display:inline-block;transform:scaleX(0.93)">0.00</span></div><div class="c" style="left:2285.3px;top:1776.6px;width:239.7px;height:159.6px;font-size:32px;color:#1a8fd6;padding-top:5px"><span style="display:inline-block;transform:scaleX(0.93)">0.00</span></div><div class="c" style="left:2525px;top:1776.6px;width:239.0px;height:159.6px;font-size:32px;color:#1a8fd6;padding-top:5px"><span style="display:inline-block;transform:scaleX(0.93)">0.00</span></div><div class="c" style="left:3063px;top:1776.6px;width:239px;height:159.6px;font-size:32px;color:#555;padding-top:5px">计算中</div><div class="c" style="left:3330.5px;top:1791.1px;width:97px;height:64.5px;border:2px solid #ccc;border-radius:10px;font-size:32px;font-weight:bold;color:#555;background:#fff;padding-top:5px;-webkit-text-stroke:0.6px #555">编辑</div><div class="c" style="left:3463.5px;top:1791.1px;width:129px;height:64.5px;border:2px solid #ccc;border-radius:10px;font-size:32px;font-weight:bold;color:#555;background:#fff;padding-top:5px;-webkit-text-stroke:0.6px #555">发工资</div><div class="c" style="left:3330.5px;top:1857.1px;width:115px;height:64.5px;border:2px solid #ccc;border-radius:10px;font-size:32px;font-weight:bold;color:#555;background:#fff;padding-top:5px;-webkit-text-stroke:0.6px #555">更多<svg width="19" height="11" style="margin-left:1px;margin-top:4px"><polygon points="0,0 19,0 9.5,10" fill="#555"/></svg></div><div class="abs" style="left:682.4px;top:1997.5px;width:32px;height:31px;border:2.5px solid #777;border-radius:5px;background:#fff"></div><div class="c" style="left:751.7px;top:1936.2px;width:149.9px;height:159.6px;font-size:32px;color:#555;padding-top:5px"><span style="display:inline-block;transform:scaleX(0.93)">7</span></div><div class="c" style="left:901.6px;top:1936.2px;width:186.4px;height:159.6px;font-size:32px;color:#1a8fd6;font-weight:600;padding-top:5px"><span style="display:inline-block;transform:scaleX(0.93)">0018</span></div><div class="c" style="left:1088px;top:1936.2px;width:299.8px;height:159.6px;font-size:32px;color:#1a8fd6;font-weight:bold;-webkit-text-stroke:0.6px #1a8fd6;padding-top:5px">霞</div><div class="c" style="left:1387.8px;top:1936.2px;width:359.5px;height:159.6px;font-size:32px;color:#555;font-weight:bold;-webkit-text-stroke:0.6px #555;padding-top:5px">生产部</div><div class="c" style="left:1747.3px;top:1936.2px;width:298.3px;height:159.6px;font-size:32px;color:#555;font-weight:bold;-webkit-text-stroke:0.6px #555;padding-top:5px">默认方案</div><div class="c" style="left:2045.6px;top:1936.2px;width:239.7px;height:159.6px;font-size:32px;color:#1a8fd6;padding-top:5px"><span style="display:inline-block;transform:scaleX(0.93)">0.00</span></div><div class="c" style="left:2285.3px;top:1936.2px;width:239.7px;height:159.6px;font-size:32px;color:#1a8fd6;padding-top:5px"><span style="display:inline-block;transform:scaleX(0.93)">0.00</span></div><div class="c" style="left:2525px;top:1936.2px;width:239.0px;height:159.6px;font-size:32px;color:#1a8fd6;padding-top:5px"><span style="display:inline-block;transform:scaleX(0.93)">0.00</span></div><div class="c" style="left:3063px;top:1936.2px;width:239px;height:159.6px;font-size:32px;color:#555;padding-top:5px">计算中</div><div class="c" style="left:3330.5px;top:1950.7px;width:97px;height:64.5px;border:2px solid #ccc;border-radius:10px;font-size:32px;font-weight:bold;color:#555;background:#fff;padding-top:5px;-webkit-text-stroke:0.6px #555">编辑</div><div class="c" style="left:3463.5px;top:1950.7px;width:129px;height:64.5px;border:2px solid #ccc;border-radius:10px;font-size:32px;font-weight:bold;color:#555;background:#fff;padding-top:5px;-webkit-text-stroke:0.6px #555">发工资</div><div class="c" style="left:3330.5px;top:2016.7px;width:115px;height:64.5px;border:2px solid #ccc;border-radius:10px;font-size:32px;font-weight:bold;color:#555;background:#fff;padding-top:5px;-webkit-text-stroke:0.6px #555">更多<svg width="19" height="11" style="margin-left:1px;margin-top:4px"><polygon points="0,0 19,0 9.5,10" fill="#555"/></svg></div><div class="abs" style="left:458px;top:2106px;width:3382px;height:7px;background:#fff"></div><div class="abs" style="left:0;top:2113px;width:3840px;height:47px;background:#036497"></div><div class="abs" style="left:1084px;top:2130px;width:15px;height:15px;background:#ee1c25"></div><div class="l" style="left:1125px;top:2113px;height:47px;font-size:32px;color:#fff">版权所有：广东宏见软件有限公司</div><div class="l" style="left:1685px;top:2113px;height:47px;font-size:32px;color:#fff">售后电话: 0755-36657208</div><div class="l" style="left:2085px;top:2113px;height:47px;font-size:32px;color:#fff">服务代码: 902997</div><div class="l" style="left:2421px;top:2113px;height:47px;font-size:32px;color:#fff">粤ICP备10239503号</div><svg class="abs" style="left:2722px;top:2121px" width="30" height="34" viewBox="0 0 30 34">
<path d="M15 3 L15 6 M5 7 L7 9 M25 7 L23 9 M2 15 L5 15 M28 15 L25 15" stroke="#f5d33a" stroke-width="2"/>
<circle cx="15" cy="17" r="8" fill="#f7e04b"/>
<rect x="11" y="23" width="8" height="8" rx="1" fill="#444"/>
</svg></body></html>
